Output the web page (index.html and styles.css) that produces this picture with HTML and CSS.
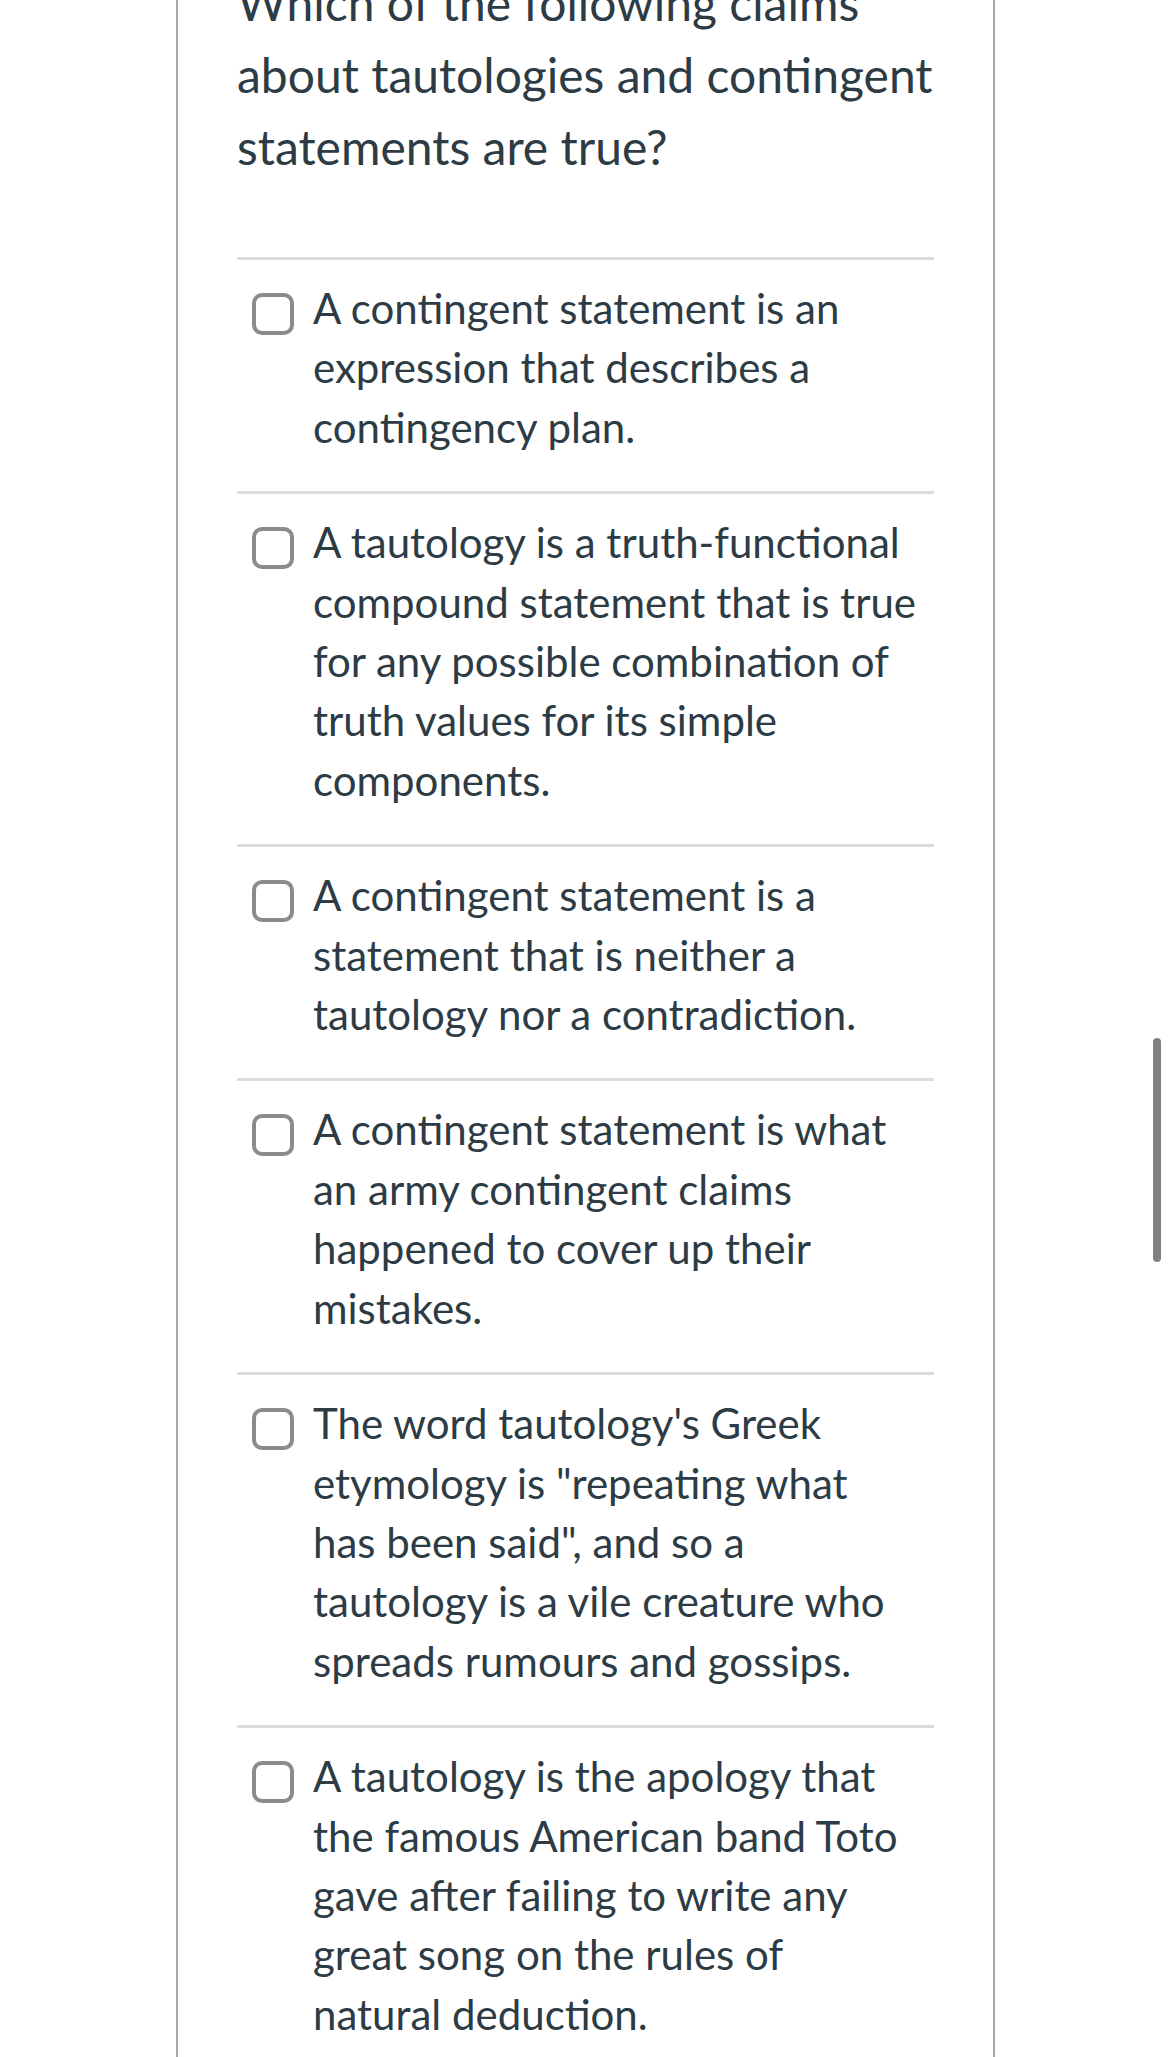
FILE: index.html
```html
<!DOCTYPE html>
<html lang="en">
<head>
<meta charset="utf-8">
<title>Quiz question</title>
<link rel="stylesheet" href="styles.css">
</head>
<body>
<div class="page">
  <div class="question">
    <p class="question-text">Which of the following claims about tautologies and contingent statements are true?</p>
    <ul class="answers">
      <li class="answer"><span class="box"></span><span class="label">A contingent statement is an expression that describes a contingency plan.</span></li>
      <li class="answer"><span class="box"></span><span class="label">A tautology is a truth-functional compound statement that is true for any possible combination of truth values for its simple components.</span></li>
      <li class="answer"><span class="box"></span><span class="label">A contingent statement is a statement that is neither a tautology nor a contradiction.</span></li>
      <li class="answer"><span class="box"></span><span class="label">A contingent statement is what an army contingent claims happened to cover up their mistakes.</span></li>
      <li class="answer"><span class="box"></span><span class="label">The word tautology's Greek etymology is "repeating what has been said", and so a tautology is a vile creature who spreads rumours and gossips.</span></li>
      <li class="answer"><span class="box"></span><span class="label">A tautology is the apology that the famous American band Toto gave after failing to write any great song on the rules of natural deduction.</span></li>
    </ul>
  </div>
</div>
<div class="scroll-thumb"></div>
</body>
</html>
```

FILE: styles.css
```css
html, body {
  margin: 0;
  padding: 0;
  background: #ffffff;
  overflow: hidden;
}
body {
  font-family: Lato, "Open Sans", sans-serif;
  color: #2d3b45;
}
.page {
  margin-left: 176px;
  width: 815px;
  border-left: 2px solid #a8a8a8;
  border-right: 2px solid #a8a8a8;
  min-height: 2200px;
  margin-top: -40px;
  padding-top: 7px;
}
.question {
  padding: 0 59px;
}
.question-text {
  margin: 0;
  font-size: 48px;
  line-height: 72px;
  padding-bottom: 74px;
}
.answers {
  list-style: none;
  margin: 0;
  padding: 0;
}
.answer {
  display: flex;
  align-items: flex-start;
  border-top: 3px solid #dcdcdc;
  padding: 19px 16px 34px 15px;
  font-size: 42px;
  line-height: 59.4px;
}
.box {
  flex: 0 0 auto;
  width: 34px;
  height: 34px;
  border: 4px solid #8b8b8f;
  border-radius: 10px;
  margin-top: 14px;
  margin-right: 19px;
}
.label {
  flex: 1 1 auto;
}
.scroll-thumb {
  position: fixed;
  left: 1153px;
  top: 1038px;
  width: 8px;
  height: 224px;
  border-radius: 4px;
  background: #808080;
}
```
